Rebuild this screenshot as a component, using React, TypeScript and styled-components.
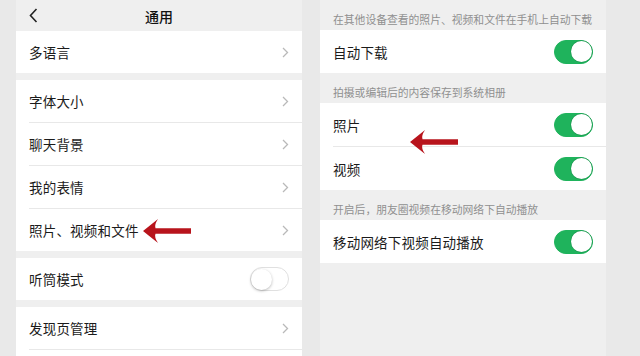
import React from 'react';
import styled, { createGlobalStyle } from 'styled-components';

const GlobalStyle = createGlobalStyle`
  html, body {
    margin: 0;
    padding: 0;
    background: #e9e9e9;
    font-family: 'Noto Sans CJK SC', 'Noto Sans', sans-serif;
  }
`;

const Page = styled.div`
  width: 640px;
  height: 356px;
  overflow: hidden;
  display: flex;
  gap: 18px;
  padding-left: 16px;
  box-sizing: border-box;
`;

const Phone = styled.div`
  position: relative;
  width: 286px;
  height: 356px;
  overflow: hidden;
  background: #efefef;
  display: flex;
  flex-direction: column;
  & > * {
    flex-shrink: 0;
  }
`;

const Header = styled.div`
  height: 31px;
  position: relative;
  display: flex;
  align-items: center;
  justify-content: center;
  font-size: 14px;
  font-weight: 500;
  color: #111;
`;

const Back = styled.svg`
  position: absolute;
  left: 13px;
  top: 8px;
`;

const Group = styled.div<{ $gap?: number }>`
  background: #fff;
  margin-top: ${(p) => p.$gap ?? 0}px;
  display: flex;
  flex-direction: column;
`;

const Row = styled.div<{ $h: number }>`
  height: ${(p) => p.$h}px;
  display: flex;
  align-items: center;
  justify-content: space-between;
  padding: 0 13px 0 13px;
  font-size: 13.5px;
  color: #1b1b1b;
  letter-spacing: 0.2px;
`;

const Divider = styled.div`
  height: 1px;
  margin-left: 13px;
  background: #e8e8e8;
`;

const Caption = styled.div`
  height: 30px;
  box-sizing: border-box;
  padding: 12px 0 0 13px;
  font-size: 10.8px;
  line-height: 14px;
  color: #8f8f8f;
  white-space: nowrap;
`;

const Track = styled.div<{ $on: boolean }>`
  width: 39px;
  height: 24px;
  border-radius: 12px;
  box-sizing: border-box;
  display: flex;
  align-items: center;
  justify-content: ${(p) => (p.$on ? 'flex-end' : 'flex-start')};
  background: ${(p) => (p.$on ? '#1fb35c' : '#fff')};
  border: 1.5px solid ${(p) => (p.$on ? '#1fb35c' : '#e0e0e0')};
`;

const Knob = styled.div<{ $on: boolean }>`
  width: 21px;
  height: 21px;
  border-radius: 50%;
  background: #fff;
  box-shadow: ${(p) =>
    p.$on ? '0 0 0 0.5px #16944a' : '0 1px 3px rgba(0,0,0,0.28)'};
`;

const ArrowBox = styled.svg<{ $x: number; $y: number }>`
  position: absolute;
  left: ${(p) => p.$x}px;
  top: ${(p) => p.$y}px;
`;

const Chevron = () => (
  <svg width="7" height="11" viewBox="0 0 7 11">
    <polyline points="1,1 5.5,5.5 1,10" fill="none" stroke="#b9b9b9" strokeWidth="1.3" />
  </svg>
);

const Toggle = ({ on }: { on: boolean }) => (
  <Track $on={on}>
    <Knob $on={on} />
  </Track>
);

const Arrow = ({ x, y }: { x: number; y: number }) => (
  <ArrowBox $x={x} $y={y} width="48" height="26" viewBox="0 0 48 26">
    <path
      d="M0 13 L15 1 Q11 7 12.5 10.3 L48 10.3 L48 15.7 L12.5 15.7 Q11 19 15 25 Z"
      fill="#b8141c"
    />
  </ArrowBox>
);

const LinkRow = ({ label }: { label?: string }) => (
  <Row $h={42}>
    <span>{label}</span>
    <Chevron />
  </Row>
);

export default function App() {
  return (
    <>
      <GlobalStyle />
      <Page>
        <Phone>
          <Header>
            <Back width="9" height="15" viewBox="0 0 9 15">
              <polyline points="7.5,1 1.5,7.5 7.5,14" fill="none" stroke="#222" strokeWidth="1.6" />
            </Back>
            通用
          </Header>
          <Group>
            <LinkRow label="多语言" />
          </Group>
          <Group $gap={7}>
            <LinkRow label="字体大小" />
            <Divider />
            <LinkRow label="聊天背景" />
            <Divider />
            <LinkRow label="我的表情" />
            <Divider />
            <LinkRow label="照片、视频和文件" />
          </Group>
          <Group $gap={7}>
            <Row $h={42}>
              <span>听筒模式</span>
              <Toggle on={false} />
            </Row>
          </Group>
          <Group $gap={7}>
            <LinkRow label="发现页管理" />
            <Divider />
            <Row $h={42} />
          </Group>
          <Arrow x={127} y={218} />
        </Phone>
        <Phone>
          <Caption>在其他设备查看的照片、视频和文件在手机上自动下载</Caption>
          <Group>
            <Row $h={43}>
              <span>自动下载</span>
              <Toggle on />
            </Row>
          </Group>
          <Caption>拍摄或编辑后的内容保存到系统相册</Caption>
          <Group>
            <Row $h={43}>
              <span>照片</span>
              <Toggle on />
            </Row>
            <Divider />
            <Row $h={43}>
              <span>视频</span>
              <Toggle on />
            </Row>
          </Group>
          <Caption>开启后，朋友圈视频在移动网络下自动播放</Caption>
          <Group>
            <Row $h={43}>
              <span>移动网络下视频自动播放</span>
              <Toggle on />
            </Row>
          </Group>
          <Arrow x={90} y={129} />
        </Phone>
      </Page>
    </>
  );
}
